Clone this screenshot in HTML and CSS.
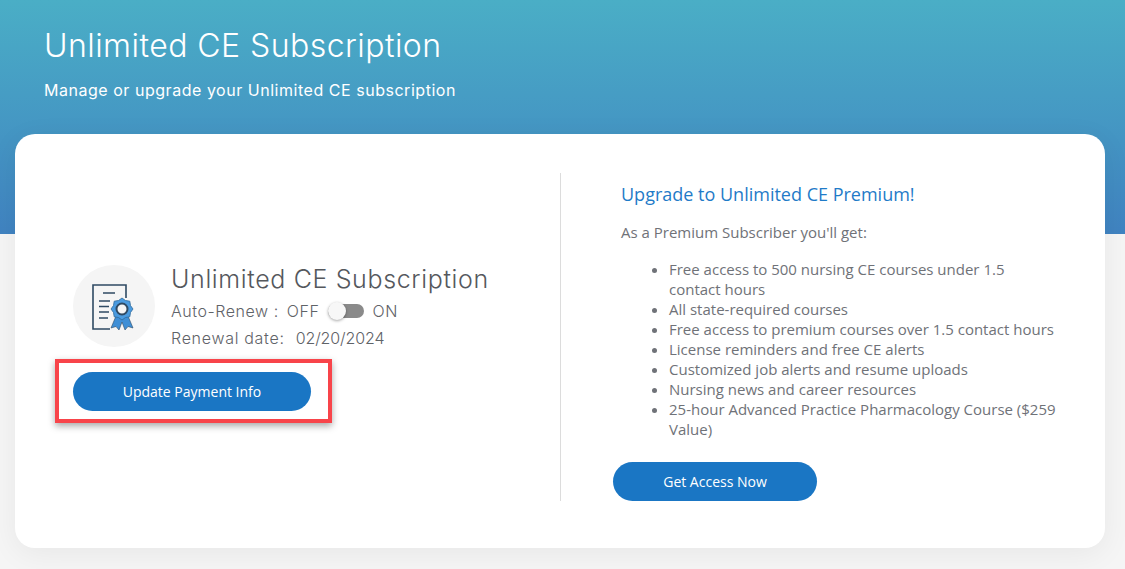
FILE: index.html
```html
<!DOCTYPE html>
<html lang="en">
<head>
<meta charset="utf-8">
<title>Unlimited CE Subscription</title>
<link rel="stylesheet" href="styles.css">
</head>
<body>
<header class="hero">
  <h1 class="hero-title">Unlimited CE Subscription</h1>
  <p class="hero-sub">Manage or upgrade your Unlimited CE subscription</p>
</header>
<main class="card">
  <section class="col-left">
    <div class="sub-row">
      <div class="badge">
        <svg class="badge-icon" viewBox="0 0 82 82" width="82" height="82" aria-hidden="true">
          <path class="ink" d="M37 64H20V20H53V33"/>
          <path class="ink" d="M30 28H42M26 36H37M26 41.500H36M26 47H36M26 53H35"/>
          <path class="ribbon" d="M43 51L38 63L43 61.500L46 65L49 57L52 65L55 61.500L60 63L55 51Z"/>
          <path class="seal" d="M49 33L52.500 35.500L56.800 36.200L57.500 40.500L60 44L57.500 47.500L56.800 51.800L52.500 52.500L49 55L45.500 52.500L41.200 51.800L40.500 47.500L38 44L40.500 40.500L41.200 36.200L45.500 35.500Z"/>
          <circle class="seal-ring" cx="49" cy="44" r="5.500"/>
        </svg>
      </div>
      <div class="sub-info">
        <h2 class="sub-title">Unlimited CE Subscription</h2>
        <div class="sub-line renew">
          <span>Auto-Renew :</span><span class="off">OFF</span>
          <span class="toggle"><span class="knob"></span></span>
          <span>ON</span>
        </div>
        <div class="sub-line date"><span class="date-label">Renewal date:</span><span class="date-val">02/20/2024</span></div>
      </div>
    </div>
    <div class="highlight">
      <a class="btn btn-pay" href="#">Update Payment Info</a>
    </div>
  </section>
  <section class="col-right">
    <h3 class="up-title">Upgrade to Unlimited CE Premium!</h3>
    <p class="up-lead">As a Premium Subscriber you'll get:</p>
    <ul class="up-list">
      <li>Free access to 500 nursing CE courses under 1.5 contact hours</li>
      <li>All state-required courses</li>
      <li>Free access to premium courses over 1.5 contact hours</li>
      <li>License reminders and free CE alerts</li>
      <li>Customized job alerts and resume uploads</li>
      <li>Nursing news and career resources</li>
      <li>25-hour Advanced Practice Pharmacology Course ($259 Value)</li>
    </ul>
    <a class="btn btn-access" href="#">Get Access Now</a>
  </section>
</main>
</body>
</html>
```
FILE: styles.css
```css
* { box-sizing: border-box; }
html, body { margin: 0; padding: 0; }
body {
  height: 569px;
  overflow: hidden;
  background: #f5f5f5;
  font-family: "Open Sans", "Liberation Sans", sans-serif;
}
.hero {
  height: 234px;
  padding: 27px 44px 0;
  background: linear-gradient(180deg, #4aaec6 0%, #4083c1 100%);
  color: #fff;
}
.hero-title {
  margin: 0;
  font: 300 32px/38px Inter, sans-serif;
  letter-spacing: 0.45px;
}
.hero-sub {
  margin: 15px 0 0;
  font: 400 16px/20px Inter, sans-serif;
  letter-spacing: 0.53px;
}
.card {
  display: flex;
  height: 414px;
  margin: -100px 20px 0 15px;
  padding: 39px 0 47px;
  background: #fff;
  border-radius: 20px;
  box-shadow: 0 6px 30px rgba(0, 0, 0, 0.06);
}
.col-left {
  display: flex;
  flex-direction: column;
  justify-content: center;
  width: 546px;
  padding: 14px 0 0 58px;
  border-right: 1px solid #dcdcdc;
}
.sub-row { display: flex; gap: 16px; align-items: flex-start; }
.badge {
  flex: none;
  width: 82px;
  height: 82px;
  border-radius: 50%;
  background: #f5f5f5;
}
.badge-icon { display: block; }
.ink { fill: none; stroke: #2f4a63; stroke-width: 1.6; }
.ribbon { fill: #3f8fd6; stroke: #2f4a63; stroke-width: 0.6; }
.seal { fill: #4a9be0; stroke: #2f6a9a; stroke-width: 0.8; stroke-linejoin: round; }
.seal-ring { fill: #f5f5f5; stroke: #2f4a63; stroke-width: 2; }
.sub-info { margin-top: -1px; color: #5f6368; }
.sub-title {
  margin: 0;
  font: 300 25px/30px Inter, sans-serif;
  letter-spacing: 0.64px;
  color: #55585d;
}
.sub-line {
  display: flex;
  align-items: center;
  font: 300 16px/20px Inter, sans-serif;
  letter-spacing: 0.55px;
}
.renew { margin-top: 7px; }
.off { margin-left: 8px; }
.toggle {
  position: relative;
  width: 36px;
  height: 14px;
  margin: 0 8px 0 9px;
  border-radius: 7px;
  background: #8a8a8a;
}
.knob {
  position: absolute;
  left: 0;
  top: -2px;
  width: 18px;
  height: 18px;
  border-radius: 50%;
  background: #f7f7f7;
  box-shadow: 0 1px 3px rgba(0, 0, 0, 0.35);
}
.date { margin-top: 7px; }
.date-label { letter-spacing: 0.7px; }
.date-val { margin-left: 11px; letter-spacing: -0.1px; }
.highlight {
  align-self: flex-start;
  margin: 11px 0 0 -18px;
  padding: 9px 17px 8px 14px;
  border: 4px solid #f8444a;
  box-shadow: 0 3px 7px rgba(0, 0, 0, 0.35);
}
.btn {
  display: block;
  height: 39px;
  border-radius: 20px;
  background: #1a76c4;
  color: #fff;
  text-align: center;
  text-decoration: none;
  font: 500 14px/39px "Open Sans", sans-serif;
}
.btn-pay { width: 238px; }
.btn-access { width: 204px; margin: 23px 0 0 -8px; }
.col-right {
  flex: 1;
  padding: 9px 48px 0 60px;
  color: #6f7278;
}
.up-title {
  margin: 0;
  font: 400 18px/24px "Open Sans", sans-serif;
  color: #1f7bc8;
}
.up-lead {
  margin: 16px 0 0;
  font: 400 15px/20px "Open Sans", sans-serif;
}
.up-list {
  margin: 17px 0 0;
  padding: 0 0 0 48px;
  font: 400 15px/20px "Open Sans", sans-serif;
}
```
